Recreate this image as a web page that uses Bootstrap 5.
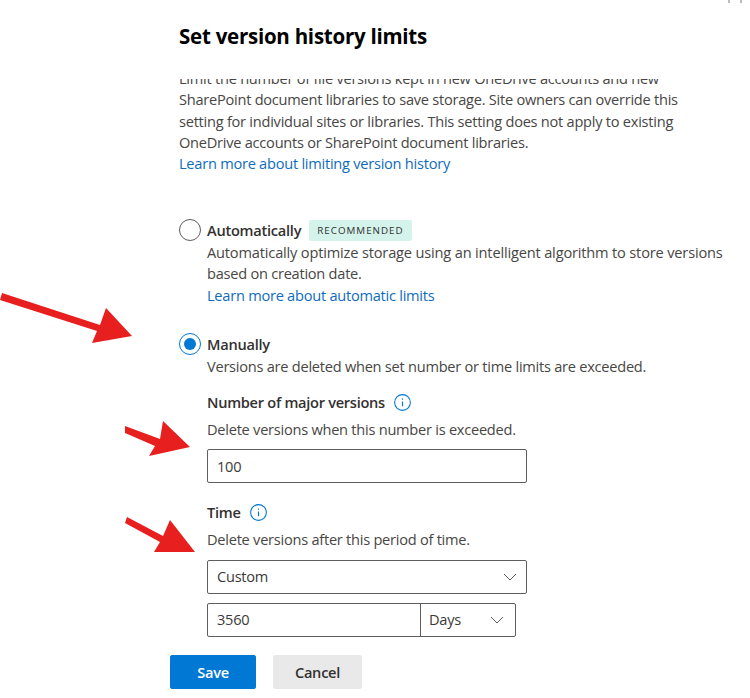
<!DOCTYPE html>
<html lang="en">
<head>
<meta charset="utf-8">
<title>Set version history limits</title>
<link href="https://cdn.jsdelivr.net/npm/bootstrap@5.3.0/dist/css/bootstrap.min.css" rel="stylesheet">
<style>
html,body{height:698px;overflow:hidden}
body{position:relative;background:#fff;font-family:"Open Sans","Liberation Sans",sans-serif;color:#484644;font-size:14.6px;line-height:21.3px;letter-spacing:-.25px}
.sheet{padding:22px 0 0 179px;width:750px}
.sheet-title{font-size:20.5px;line-height:28px;font-weight:700;color:#000;margin:0 0 29px;letter-spacing:-.25px}
.scroller{height:96px;overflow:hidden;width:530px;margin-bottom:44px}
.scroller p{margin:-11px 0 0}
.ms-link{color:#0f6cbd;text-decoration:none}
.opt{gap:6px}
.dot{flex:none;width:22px;height:22px;border-radius:50%;border:1px solid #605e5c;background:#fff;display:flex;align-items:center;justify-content:center}
.dot.on{border-color:#0078d4;border-width:1.5px}
.dot.on::after{content:"";width:12px;height:12px;border-radius:50%;background:#0078d4}
.opt-title{font-weight:600;color:#323130;line-height:23px}
.rec-tag{background:#d3f3eb;color:#323130;font-size:9.8px;font-weight:400;letter-spacing:1px;line-height:21px;padding:0 8px;border-radius:2px;margin-left:8px}
.opt-a{margin-bottom:27px}
.long-line{letter-spacing:-.17px}
.sub-label{font-weight:600;color:#323130;line-height:22px;gap:9px;letter-spacing:-.28px}
.lab-major{margin-top:14px}
.lab-time{margin-top:18px}
.hint{margin-top:6px}
.inf{width:17px;height:17px;display:block}
.fld{height:34px;border:1px solid #605e5c;border-radius:2px;background:#fff;color:#3b3a39;padding:0 9px;display:flex;align-items:center;justify-content:space-between;margin-top:9px}
.w-main{width:320px}
.w-combo{width:309px;padding:0}
.seg1{flex:1;border-right:1px solid #605e5c;height:100%;display:flex;align-items:center;padding:0 9px}
.seg2{width:94px;height:100%;display:flex;align-items:center;justify-content:space-between;padding:0 11px 0 8px}
.chev{width:14px;height:8px;display:block}
.act{gap:17px;margin:18px 0 0 -9px}
.act .btn{height:34px;border-radius:2px;font-size:14.6px;font-weight:600;padding:0;line-height:32px;letter-spacing:-.25px}
.b-save{width:86px;background:#0078d4;border-color:#0078d4;color:#fff}
.b-cancel{width:89px;background:#e9e9e9;border-color:#e9e9e9;color:#323130}
.overlay{position:absolute;left:0;top:0;width:750px;height:698px;pointer-events:none}
</style>
</head>
<body>
<main class="sheet">
  <h1 class="sheet-title">Set version history limits</h1>
  <div class="scroller">
    <p>Limit the number of file versions kept in new OneDrive accounts and new SharePoint document libraries to save storage. Site owners can override this setting for individual sites or libraries. This setting does not apply to existing OneDrive accounts or SharePoint document libraries.<br><a class="ms-link" href="#">Learn more about limiting version history</a></p>
  </div>
  <div class="d-flex opt opt-a">
    <span class="dot"></span>
    <div>
      <div class="d-flex align-items-center"><span class="opt-title">Automatically</span><span class="rec-tag">RECOMMENDED</span></div>
      <div><span class="long-line">Automatically optimize storage using an intelligent algorithm to store versions</span><br>based on creation date.</div>
      <a class="ms-link" href="#">Learn more about automatic limits</a>
    </div>
  </div>
  <div class="d-flex opt">
    <span class="dot on"></span>
    <div>
      <div class="opt-title">Manually</div>
      <div>Versions are deleted when set number or time limits are exceeded.</div>
      <div class="d-flex align-items-center sub-label lab-major">Number of major versions
        <svg class="inf" viewBox="0 0 16 16" fill="none" stroke="#0078d4"><circle cx="8" cy="8" r="7.4"/><path d="M8 7v4.6M8 4.2v1.2" stroke-width="1.1"/></svg></div>
      <div class="hint">Delete versions when this number is exceeded.</div>
      <div class="fld w-main">100</div>
      <div class="d-flex align-items-center sub-label lab-time">Time
        <svg class="inf" viewBox="0 0 16 16" fill="none" stroke="#0078d4"><circle cx="8" cy="8" r="7.4"/><path d="M8 7v4.6M8 4.2v1.2" stroke-width="1.1"/></svg></div>
      <div class="hint">Delete versions after this period of time.</div>
      <div class="fld w-main"><span>Custom</span><svg class="chev" viewBox="0 0 14 8" fill="none" stroke="#605e5c"><path d="M1 1l6 6 6-6"/></svg></div>
      <div class="fld w-combo">
        <span class="seg1">3560</span>
        <span class="seg2">Days<svg class="chev" viewBox="0 0 14 8" fill="none" stroke="#605e5c"><path d="M1 1l6 6 6-6"/></svg></span>
      </div>
    </div>
  </div>
  <div class="d-flex act">
    <button class="btn b-save" type="button">Save</button>
    <button class="btn b-cancel" type="button">Cancel</button>
  </div>
</main>
<svg class="overlay" viewBox="0 0 750 698" aria-hidden="true">
  <g fill="#e81f1f">
    <path d="M2 293 L100 325 L106 308 L132 336 L92 343 L97 331 L0 300Z"/>
    <path d="M125 426 L160 439 L163 421 L190 447 L149 456 L155 446 L125 433Z"/>
    <path d="M127 517 L163 536 L170 520 L195 552 L154 552 L160 542 L125 523Z"/>
  </g>
  <path d="M729 0v3M741 0v3" stroke="#777" stroke-width="1"/>
</svg>
</body>
</html>
